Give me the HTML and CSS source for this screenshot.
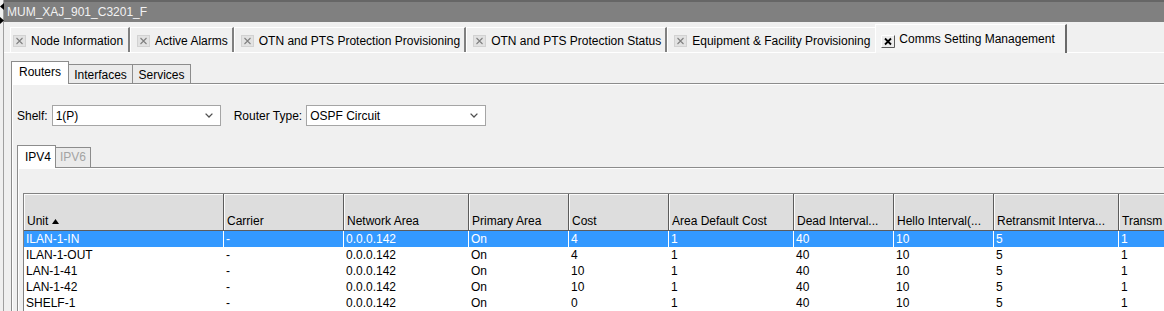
FILE: index.html
```html
<!DOCTYPE html>
<html>
<head>
<meta charset="utf-8">
<title>Comms Setting Management</title>
<link rel="stylesheet" href="styles.css">
</head>
<body>
<svg class="split-arrow split-left" width="4" height="7" viewBox="0 0 4 7"><polygon points="4,0 0,3.5 4,7" fill="#000"/></svg>
<svg class="split-arrow split-right" width="4" height="7" viewBox="0 0 4 7"><polygon points="0,0 4,3.5 0,7" fill="#000"/></svg>
<div class="frame">
  <div class="titlebar">MUM_XAJ_901_C3201_F</div>
  <div class="maintabs">
    <div class="tab first"><svg class="xbox" width="13" height="12" viewBox="0 0 13 12"><rect x="0.5" y="0.5" width="12" height="11" fill="#e2e2e2" stroke="#d2d2d2"/><path d="M3.5 3 L9.5 9 M9.5 3 L3.5 9" stroke="#808080" stroke-width="1.1"/></svg><span class="tab-label">Node Information</span></div>
    <div class="tab"><svg class="xbox" width="13" height="12" viewBox="0 0 13 12"><rect x="0.5" y="0.5" width="12" height="11" fill="#e2e2e2" stroke="#d2d2d2"/><path d="M3.5 3 L9.5 9 M9.5 3 L3.5 9" stroke="#808080" stroke-width="1.1"/></svg><span class="tab-label">Active Alarms</span></div>
    <div class="tab"><svg class="xbox" width="13" height="12" viewBox="0 0 13 12"><rect x="0.5" y="0.5" width="12" height="11" fill="#e2e2e2" stroke="#d2d2d2"/><path d="M3.5 3 L9.5 9 M9.5 3 L3.5 9" stroke="#808080" stroke-width="1.1"/></svg><span class="tab-label">OTN and PTS Protection Provisioning</span></div>
    <div class="tab"><svg class="xbox" width="13" height="12" viewBox="0 0 13 12"><rect x="0.5" y="0.5" width="12" height="11" fill="#e2e2e2" stroke="#d2d2d2"/><path d="M3.5 3 L9.5 9 M9.5 3 L3.5 9" stroke="#808080" stroke-width="1.1"/></svg><span class="tab-label">OTN and PTS Protection Status</span></div>
    <div class="tab presel"><svg class="xbox" width="13" height="12" viewBox="0 0 13 12"><rect x="0.5" y="0.5" width="12" height="11" fill="#e2e2e2" stroke="#d2d2d2"/><path d="M3.5 3 L9.5 9 M9.5 3 L3.5 9" stroke="#808080" stroke-width="1.1"/></svg><span class="tab-label">Equipment &amp; Facility Provisioning</span></div>
    <div class="tab selected"><svg class="xbox" width="14" height="13" viewBox="0 0 14 13"><rect x="0" y="0" width="14" height="13" fill="#ececec"/><path d="M0.5 12.5V0.5H13.5" stroke="#ffffff" fill="none"/><path d="M0.5 12.5H13.5V0.5" stroke="#5a5a5a" fill="none"/><path d="M4 3.5 L10 9.5 M10 3.5 L4 9.5" stroke="#000" stroke-width="1.8"/></svg><span class="tab-label">Comms Setting Management</span></div>
  </div>
  <div class="mainpanel">
    <div class="subtabs">
      <div class="subtab sel routers">Routers</div>
      <div class="subtab interfaces">Interfaces</div>
      <div class="subtab services">Services</div>
    </div>
    <div class="subpanel">
      <div class="filters">
        <span class="flabel">Shelf:</span>
        <div class="combo combo-shelf"><span>1(P)</span><svg class="chev" width="8" height="5" viewBox="0 0 8 5"><polyline points="0.6,0.6 4,4 7.4,0.6" fill="none" stroke="#505050" stroke-width="1.3"/></svg></div>
        <span class="flabel router-label">Router Type:</span>
        <div class="combo combo-router"><span>OSPF Circuit</span><svg class="chev" width="8" height="5" viewBox="0 0 8 5"><polyline points="0.6,0.6 4,4 7.4,0.6" fill="none" stroke="#505050" stroke-width="1.3"/></svg></div>
      </div>
      <div class="ipvtabs">
        <div class="ipvtab sel">IPV4</div>
        <div class="ipvtab disabled">IPV6</div>
      </div>
      <div class="ipvpanel">
        <div class="grid">
          <div class="grow ghead">
            <div class="th">Unit<svg class="sort" width="7" height="5" viewBox="0 0 7 5"><polygon points="0,5 3.5,0 7,5" fill="#000"/></svg></div>
            <div class="th">Carrier</div>
            <div class="th">Network Area</div>
            <div class="th">Primary Area</div>
            <div class="th">Cost</div>
            <div class="th">Area Default Cost</div>
            <div class="th">Dead Interval...</div>
            <div class="th">Hello Interval(...</div>
            <div class="th">Retransmit Interva...</div>
            <div class="th">Transm</div>
          </div>
          <div class="grow row sel">
            <div class="td">ILAN-1-IN</div><div class="td">-</div><div class="td">0.0.0.142</div><div class="td">On</div><div class="td">4</div><div class="td">1</div><div class="td">40</div><div class="td">10</div><div class="td">5</div><div class="td">1</div>
          </div>
          <div class="grow row">
            <div class="td">ILAN-1-OUT</div><div class="td">-</div><div class="td">0.0.0.142</div><div class="td">On</div><div class="td">4</div><div class="td">1</div><div class="td">40</div><div class="td">10</div><div class="td">5</div><div class="td">1</div>
          </div>
          <div class="grow row">
            <div class="td">LAN-1-41</div><div class="td">-</div><div class="td">0.0.0.142</div><div class="td">On</div><div class="td">10</div><div class="td">1</div><div class="td">40</div><div class="td">10</div><div class="td">5</div><div class="td">1</div>
          </div>
          <div class="grow row">
            <div class="td">LAN-1-42</div><div class="td">-</div><div class="td">0.0.0.142</div><div class="td">On</div><div class="td">10</div><div class="td">1</div><div class="td">40</div><div class="td">10</div><div class="td">5</div><div class="td">1</div>
          </div>
          <div class="grow row">
            <div class="td">SHELF-1</div><div class="td">-</div><div class="td">0.0.0.142</div><div class="td">On</div><div class="td">0</div><div class="td">1</div><div class="td">40</div><div class="td">10</div><div class="td">5</div><div class="td">1</div>
          </div>
        </div>
      </div>
    </div>
  </div>
</div>
</body>
</html>
```
FILE: styles.css
```css
* { box-sizing: border-box; }
html, body { margin: 0; padding: 0; }
body {
  width: 1164px;
  height: 311px;
  overflow: hidden;
  position: relative;
  background: #f0f0f0;
  font-family: "Liberation Sans", Arial, sans-serif;
  font-size: 12px;
  color: #000;
}
.split-arrow { position: absolute; left: 0; display: block; }
.split-left { top: 3px; }
.split-right { top: 17px; }

.frame {
  margin-left: 3px;
  border-left: 1px solid #a0a0a0;
  height: 311px;
  overflow: hidden;
}
.titlebar {
  height: 22px;
  border-top: 2px solid #666666;
  background: #808080;
  color: #f2f2f2;
  padding-left: 3px;
  line-height: 21px;
  white-space: nowrap;
}

/* main tabs */
.maintabs {
  display: flex;
  align-items: flex-start;
  margin-top: 2px;
  padding-left: 6px;
  height: 28px;
}
.tab {
  margin-top: 3px;
  height: 25px;
  border-top: 1px solid #ffffff;
  border-left: 1px solid #ffffff;
  border-right: 2px solid #808080;
  padding: 2px 4px 0 6px;
  display: flex;
  align-items: center;
  white-space: nowrap;
}
.tab.first { padding-left: 2px; padding-right: 5px; }
.tab.presel { border-right: 0; padding-right: 5px; }
.xbox { display: block; margin-right: 5px; flex: none; }
.tab-label { line-height: 14px; }
.tab.selected {
  margin-top: 0;
  height: 29px;
  margin-bottom: -1px;
  position: relative;
  z-index: 2;
  background: #f4f4f4;
  border-right: 2px solid #6a6a6a;
  padding: 0 10px 0 5px;
  align-items: flex-start;
}
.tab.selected .xbox { margin-top: 10px; margin-right: 4px; }
.tab.selected .tab-label { margin-top: 7px; }

/* main panel */
.mainpanel {
  border-top: 1px solid #ffffff;
  padding-top: 8px;
}
.subtabs {
  display: flex;
  align-items: flex-end;
  margin-left: 7px;
  height: 22px;
}
.subtab {
  height: 19px;
  border-top: 1px solid #8c8c8c;
  border-right: 1px solid #8c8c8c;
  background: #ebebeb;
  text-align: center;
  padding-top: 3px;
  line-height: 14px;
  white-space: nowrap;
}
.subtab.sel {
  height: 23px;
  margin-bottom: -1px;
  border-left: 1px solid #8c8c8c;
  background: #ffffff;
  position: relative;
  z-index: 2;
  padding-top: 3px;
}
.routers { width: 58px; }
.interfaces { width: 64px; }
.services { width: 58px; }

.subpanel {
  margin-left: 7px;
  width: 1300px;
  height: 240px;
  border-left: 1px solid #8c8c8c;
  border-top: 1px solid #8c8c8c;
  box-shadow: inset 1px 1px 0 #ffffff;
  padding-left: 5px;
}
.filters {
  display: flex;
  align-items: center;
  margin-top: 21px;
  height: 21px;
}
.flabel { margin-right: 4px; white-space: nowrap; }
.router-label { margin-left: 13px; }
.combo {
  height: 21px;
  background: #ffffff;
  border: 1px solid #a5a5a5;
  display: flex;
  align-items: center;
  padding-left: 3px;
  white-space: nowrap;
}
.combo-shelf { width: 169px; }
.combo-router { width: 180px; }
.chev { display: block; margin-left: auto; margin-right: 7px; }

.ipvtabs {
  display: flex;
  align-items: flex-end;
  margin-top: 19px;
  height: 22px;
}
.ipvtab {
  line-height: 14px;
  border-top: 1px solid #8c8c8c;
  border-right: 1px solid #8c8c8c;
  white-space: nowrap;
}
.ipvtab.sel {
  width: 39px;
  height: 23px;
  margin-bottom: -1px;
  border-left: 1px solid #8c8c8c;
  background: #ffffff;
  position: relative;
  z-index: 2;
  padding: 4px 0 0 7px;
}
.ipvtab.disabled {
  width: 35px;
  height: 20px;
  background: #ebebeb;
  color: #a3a3a3;
  padding: 2px 0 0 4px;
}
.ipvpanel {
  border-left: 1px solid #8c8c8c;
  border-top: 1px solid #8c8c8c;
  box-shadow: inset 1px 1px 0 #ffffff;
  padding: 25px 0 0 5px;
  height: 160px;
}

/* table */
.grid {
  width: 1236px;
  border-left: 1px solid #828282;
  border-top: 1px solid #828282;
}
.grow {
  display: grid;
  grid-template-columns: 200px 120px 125px 100px 100px 125px 100px 100px 125px 140px;
}
.ghead { height: 37px; }
.th {
  background: #dddddd;
  border-right: 1px solid #5c5c5c;
  border-bottom: 1px solid #5c5c5c;
  box-shadow: inset 1px 1px 0 #fbfbfb;
  display: flex;
  align-items: flex-end;
  padding: 0 0 2px 3px;
  line-height: 14px;
  white-space: nowrap;
  overflow: hidden;
}
.sort { display: block; margin: 0 0 4px 4px; }
.row { background: #ffffff; }
.row.sel { background: #3399ff; color: #ffffff; }
.td {
  height: 16px;
  line-height: 16px;
  padding-left: 2px;
  border-right: 1px solid #ffffff;
  white-space: nowrap;
  overflow: hidden;
}
```
